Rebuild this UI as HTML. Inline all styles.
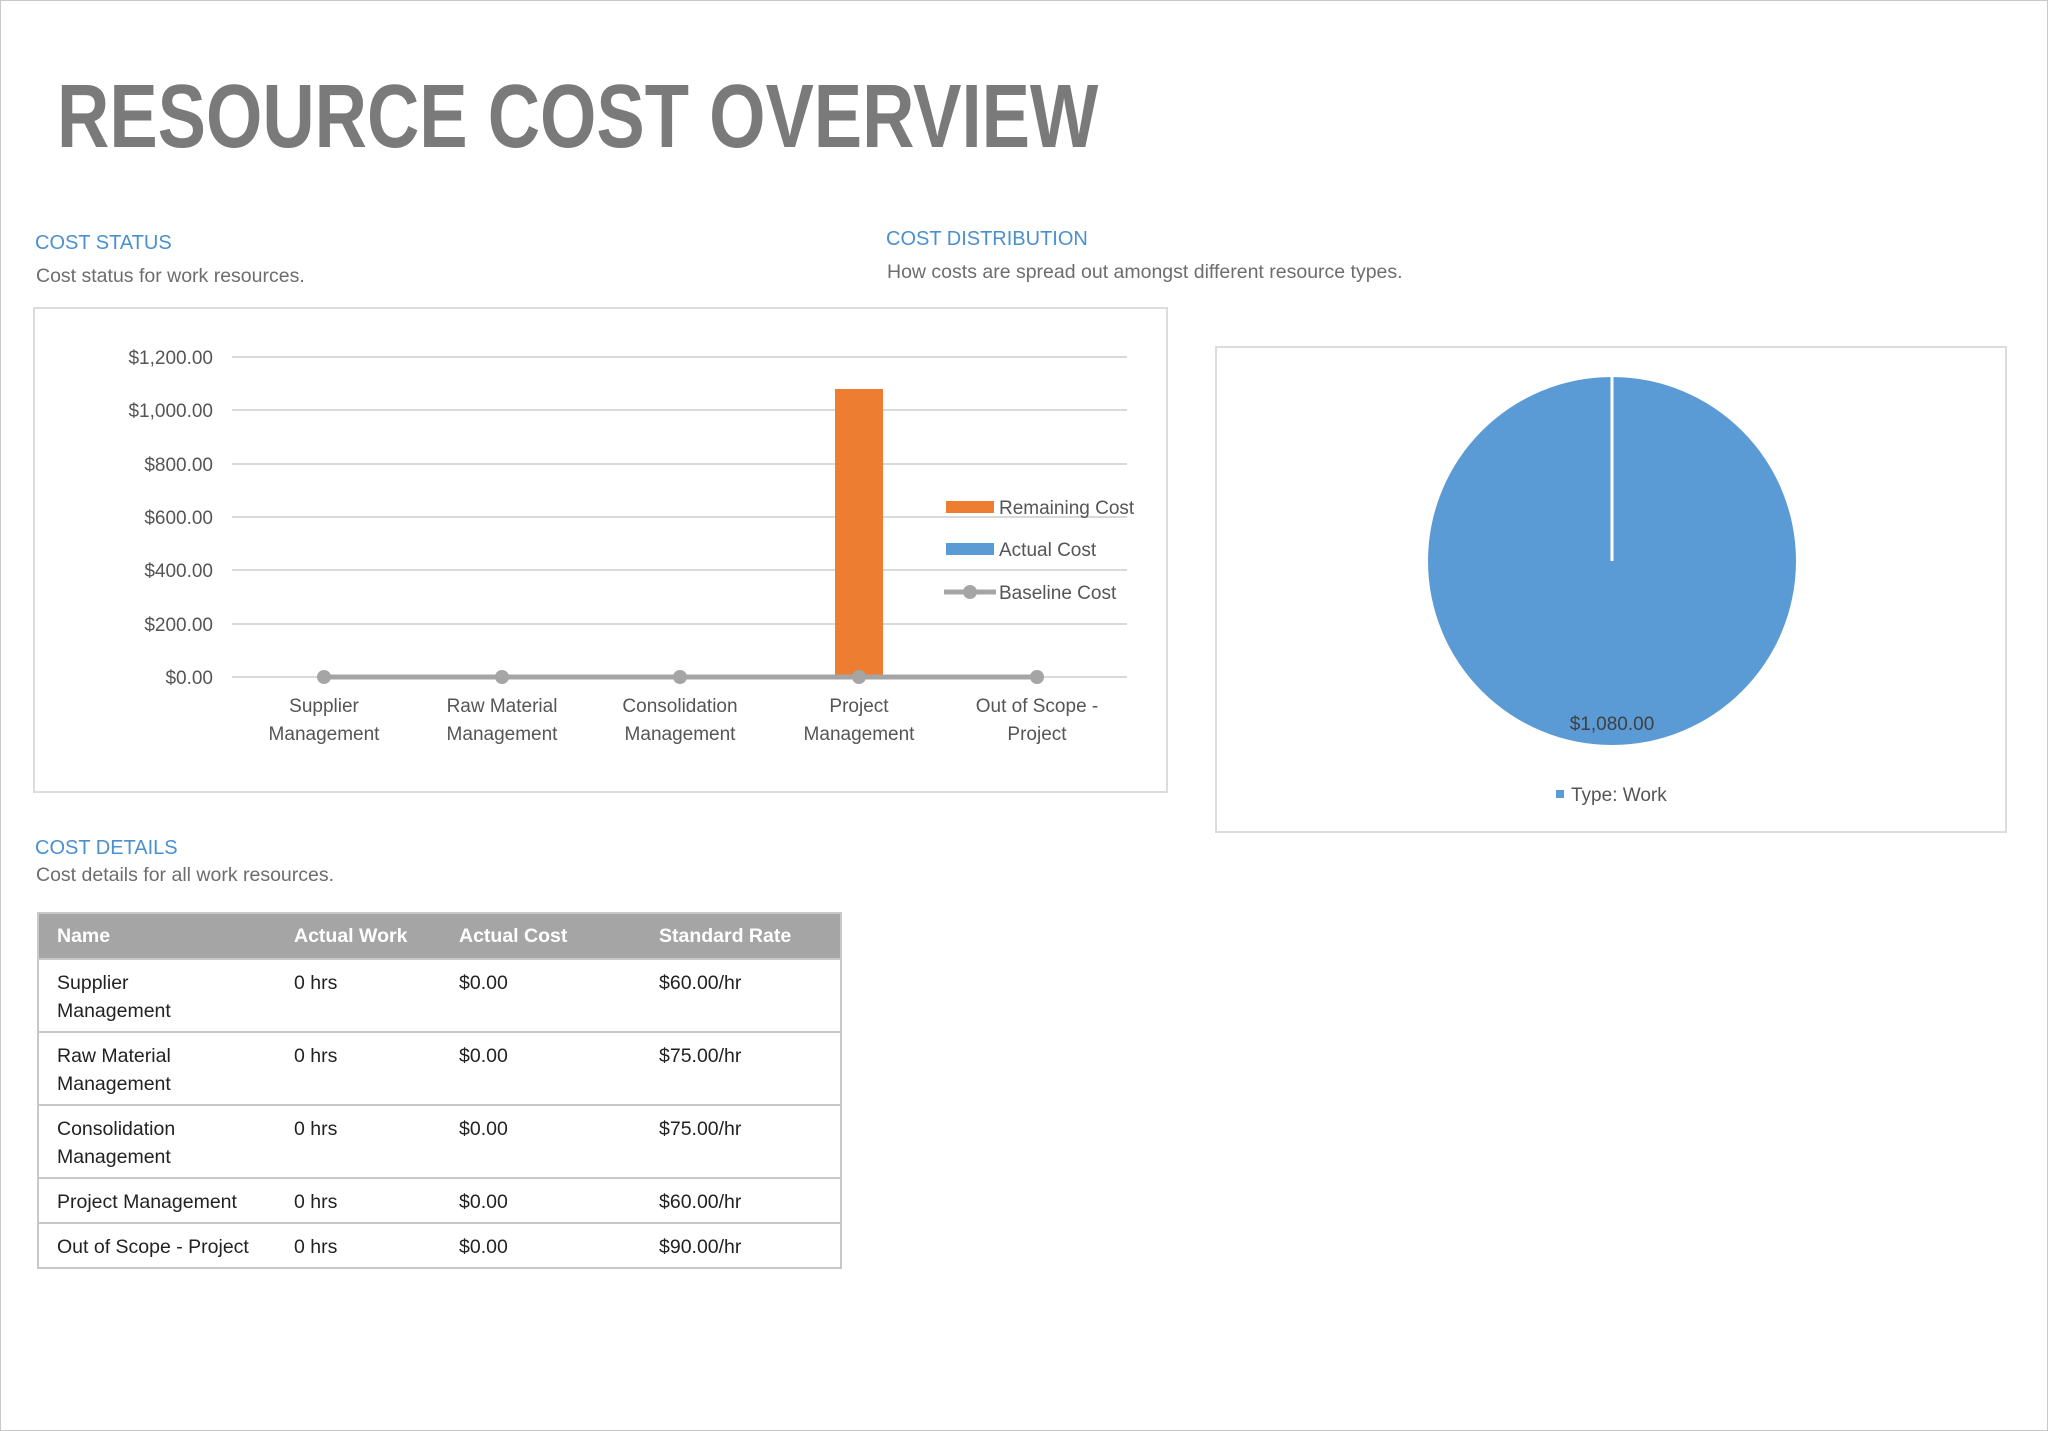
<!DOCTYPE html>
<html><head><meta charset="utf-8"><style>
html,body{margin:0;padding:0}
body{width:2048px;height:1431px;position:relative;background:#fff;font-family:"Liberation Sans",sans-serif;overflow:hidden}
.page{position:absolute;left:0;top:0;width:2046px;height:1429px;border:1px solid #c8c8c8}
.abs{position:absolute;white-space:nowrap}
.title{left:57px;top:62px;font-size:90px;font-weight:bold;color:#7a7a7a;transform:scaleX(0.805);transform-origin:0 0;line-height:110px}
.h{color:#4a90cf;font-size:20px}
.sub{color:#6d6d6d;font-size:19.5px}
.box{position:absolute;border:2px solid #dcdcdc;background:#fff}
table{position:absolute;left:37px;top:912px;width:805px;border-collapse:collapse;font-size:19.5px;color:#222;border:2px solid #c8c8c8}
th{background:#a5a5a5;color:#fff;text-align:left;font-weight:bold;height:44px;padding:0 0 0 18px}
td{vertical-align:top;padding:9px 0 0 18px;line-height:28px;border-top:2px solid #c8c8c8}
tr.r2 td{height:62px}
tr.r1 td{height:34px}
</style></head><body>
<div class="page"></div>
<div class="abs title">RESOURCE COST OVERVIEW</div>

<div class="abs h" style="left:35px;top:232px">COST STATUS</div>
<div class="abs sub" style="left:36px;top:265px">Cost status for work resources.</div>
<div class="abs h" style="left:886px;top:228px">COST DISTRIBUTION</div>
<div class="abs sub" style="left:887px;top:261px">How costs are spread out amongst different resource types.</div>

<div class="box" style="left:33px;top:307px;width:1131px;height:482px"></div>
<svg class="abs" style="left:0;top:0" width="2048" height="1431">
 <g stroke="#d9d9d9" stroke-width="2">
  <line x1="232" x2="1127" y1="357" y2="357"/>
  <line x1="232" x2="1127" y1="410" y2="410"/>
  <line x1="232" x2="1127" y1="464" y2="464"/>
  <line x1="232" x2="1127" y1="517" y2="517"/>
  <line x1="232" x2="1127" y1="570" y2="570"/>
  <line x1="232" x2="1127" y1="624" y2="624"/>
  <line x1="232" x2="1127" y1="677" y2="677"/>
 </g>
 <g font-family="Liberation Sans" font-size="19" fill="#555" text-anchor="end">
  <text x="213" y="364">$1,200.00</text>
  <text x="213" y="417">$1,000.00</text>
  <text x="213" y="471">$800.00</text>
  <text x="213" y="524">$600.00</text>
  <text x="213" y="577">$400.00</text>
  <text x="213" y="631">$200.00</text>
  <text x="213" y="684">$0.00</text>
 </g>
 <rect x="835" y="389" width="48" height="288" fill="#ed7d31"/>
 <line x1="324" x2="1037" y1="677" y2="677" stroke="#a5a5a5" stroke-width="5"/>
 <g fill="#a5a5a5">
  <circle cx="324" cy="677" r="7"/><circle cx="502" cy="677" r="7"/><circle cx="680" cy="677" r="7"/><circle cx="859" cy="677" r="7"/><circle cx="1037" cy="677" r="7"/>
 </g>
 <g font-family="Liberation Sans" font-size="19" fill="#555" text-anchor="middle">
  <text x="324" y="712">Supplier</text><text x="324" y="740">Management</text>
  <text x="502" y="712">Raw Material</text><text x="502" y="740">Management</text>
  <text x="680" y="712">Consolidation</text><text x="680" y="740">Management</text>
  <text x="859" y="712">Project</text><text x="859" y="740">Management</text>
  <text x="1037" y="712">Out of Scope -</text><text x="1037" y="740">Project</text>
 </g>
 <rect x="946" y="501" width="48" height="12" fill="#ed7d31"/>
 <rect x="946" y="543" width="48" height="12" fill="#5b9bd5"/>
 <line x1="944" x2="996" y1="592" y2="592" stroke="#a5a5a5" stroke-width="5"/>
 <circle cx="970" cy="592" r="7" fill="#a5a5a5"/>
 <g font-family="Liberation Sans" font-size="19" fill="#555">
  <text x="999" y="514">Remaining Cost</text>
  <text x="999" y="556">Actual Cost</text>
  <text x="999" y="599">Baseline Cost</text>
 </g>
</svg>

<div class="box" style="left:1215px;top:346px;width:788px;height:483px"></div>
<svg class="abs" style="left:0;top:0" width="2048" height="1431">
 <circle cx="1612" cy="561" r="184" fill="#5b9bd5"/>
 <line x1="1612" y1="375" x2="1612" y2="561" stroke="#fff" stroke-width="3"/>
 <text x="1612" y="730" font-family="Liberation Sans" font-size="19" fill="#404040" text-anchor="middle">$1,080.00</text>
 <rect x="1556" y="790" width="8" height="8" fill="#5b9bd5"/>
 <text x="1571" y="801" font-family="Liberation Sans" font-size="19" fill="#555">Type: Work</text>
</svg>

<div class="abs h" style="left:35px;top:837px">COST DETAILS</div>
<div class="abs sub" style="left:36px;top:864px">Cost details for all work resources.</div>

<table>
 <tr><th style="width:219px">Name</th><th style="width:147px">Actual Work</th><th style="width:182px">Actual Cost</th><th>Standard Rate</th></tr>
 <tr class="r2"><td>Supplier<br>Management</td><td>0 hrs</td><td>$0.00</td><td>$60.00/hr</td></tr>
 <tr class="r2"><td>Raw Material<br>Management</td><td>0 hrs</td><td>$0.00</td><td>$75.00/hr</td></tr>
 <tr class="r2"><td>Consolidation<br>Management</td><td>0 hrs</td><td>$0.00</td><td>$75.00/hr</td></tr>
 <tr class="r1"><td>Project Management</td><td>0 hrs</td><td>$0.00</td><td>$60.00/hr</td></tr>
 <tr class="r1"><td>Out of Scope - Project</td><td>0 hrs</td><td>$0.00</td><td>$90.00/hr</td></tr>
</table>
</body></html>
